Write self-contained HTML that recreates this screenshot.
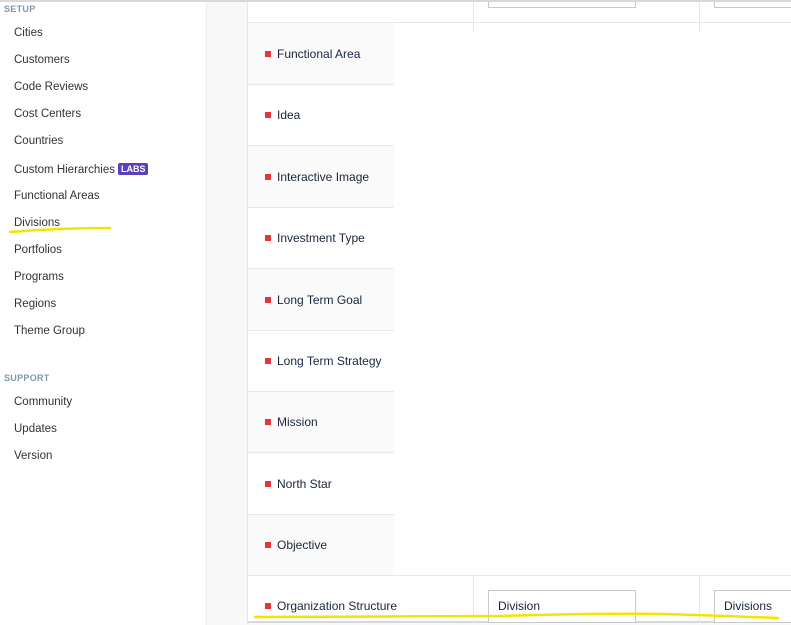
<!DOCTYPE html>
<html style="width:791px;height:625px;overflow:hidden"><head><style>
*{margin:0;padding:0;box-sizing:border-box}
body{width:791px;height:625px;overflow:hidden;background:#f8f8f8;font-family:"Liberation Sans",sans-serif;position:relative}
.sb{position:absolute;left:0;top:0;width:207px;height:625px;background:#fff;border-right:1px solid #ececec}
.h{position:absolute;left:4px;font-size:9px;font-weight:bold;color:#7f97b2;letter-spacing:.3px}
.it{position:absolute;left:14px;font-size:11.5px;color:#333}
.labs{display:inline-block;background:#5a3fc0;color:#fff;font-size:9px;font-weight:bold;padding:1px 3px;border-radius:2px;margin-left:3px;vertical-align:1px}
.tb{position:absolute;left:247px;top:0;width:544px;height:623px;background:#fff;border-left:1px solid #e6e6e6;border-bottom:2px solid #d8d8d8}
.row{position:absolute;left:0;width:544px;border-top:1px solid #e8e8e8}
.lab{position:absolute;left:0;width:146px;height:100%;}
.lab span{position:absolute;left:29px;top:50%;transform:translateY(-50%);font-size:12px;color:#1a2440;white-space:nowrap}
.lab i{position:absolute;left:17px;top:50%;margin-top:-3px;width:6px;height:6px;background:#e8333a}
.vl{position:absolute;width:1px;background:#e8e8e8}
.inp{position:absolute;border:1px solid #c8c8c8;background:#fff;font-size:12px;color:#1a2440;padding:8px 9px}
.top{position:absolute;left:0;top:0;width:791px;height:2px;background:#d8d8d8}
</style></head><body>
<div class="sb">
<div class="h" style="top:4px">SETUP</div>
<div class="it" style="top:27px">Cities</div>
<div class="it" style="top:54px">Customers</div>
<div class="it" style="top:81px">Code Reviews</div>
<div class="it" style="top:108px">Cost Centers</div>
<div class="it" style="top:135px">Countries</div>
<div class="it" style="top:163px">Custom Hierarchies<span class="labs">LABS</span></div>
<div class="it" style="top:190px">Functional Areas</div>
<div class="it" style="top:217px">Divisions</div>
<div class="it" style="top:244px">Portfolios</div>
<div class="it" style="top:271px">Programs</div>
<div class="it" style="top:298px">Regions</div>
<div class="it" style="top:325px">Theme Group</div>
<div class="h" style="top:373px">SUPPORT</div>
<div class="it" style="top:396px">Community</div>
<div class="it" style="top:423px">Updates</div>
<div class="it" style="top:450px">Version</div>
</div>
<div class="tb">
<div class="vl" style="left:225px;top:0;height:32px"></div>
<div class="vl" style="left:451px;top:0;height:32px"></div>
<div class="vl" style="left:225px;top:575px;height:48px"></div>
<div class="vl" style="left:451px;top:575px;height:48px"></div>
<div class="inp" style="left:240px;top:-10px;width:148px;height:17px"></div>
<div class="inp" style="left:466px;top:-10px;width:90px;height:17px"></div>
<div class="row" style="top:22px;height:62px"><div class="lab" style="background:#fafafa"><i></i><span>Functional Area</span></div></div>
<div class="row" style="top:84px;height:61px"><div class="lab"><i></i><span>Idea</span></div></div>
<div class="row" style="top:145px;height:62px"><div class="lab" style="background:#fafafa"><i></i><span>Interactive Image</span></div></div>
<div class="row" style="top:207px;height:61px"><div class="lab"><i></i><span>Investment Type</span></div></div>
<div class="row" style="top:268px;height:62px"><div class="lab" style="background:#fafafa"><i></i><span>Long Term Goal</span></div></div>
<div class="row" style="top:330px;height:61px"><div class="lab"><i></i><span>Long Term Strategy</span></div></div>
<div class="row" style="top:391px;height:61px"><div class="lab" style="background:#fafafa"><i></i><span>Mission</span></div></div>
<div class="row" style="top:452px;height:62px"><div class="lab"><i></i><span>North Star</span></div></div>
<div class="row" style="top:514px;height:61px"><div class="lab" style="background:#fafafa"><i></i><span>Objective</span></div></div>
<div class="row" style="top:575px;height:48px"><div class="lab" style="height:60px"><i></i><span>Organization Structure</span></div></div>
<div style="position:absolute;left:146px;top:32px;width:398px;height:543px;background:#fff"></div>
<div class="inp" style="left:240px;top:590px;width:148px;height:33px">Division</div>
<div class="inp" style="left:466px;top:590px;width:90px;height:33px">Divisions</div>
</div>
<div class="top"></div>
<svg style="position:absolute;left:0;top:0" width="791" height="625">
<path d="M10 232 Q60 228 110 228" stroke="#f5e400" stroke-width="2.5" fill="none" stroke-linecap="round"/>
<path d="M255 617 L500 616 Q600 613 660 614 Q700 615 778 618" stroke="#f5e400" stroke-width="2.5" fill="none" stroke-linecap="round"/>
</svg>
</body></html>
